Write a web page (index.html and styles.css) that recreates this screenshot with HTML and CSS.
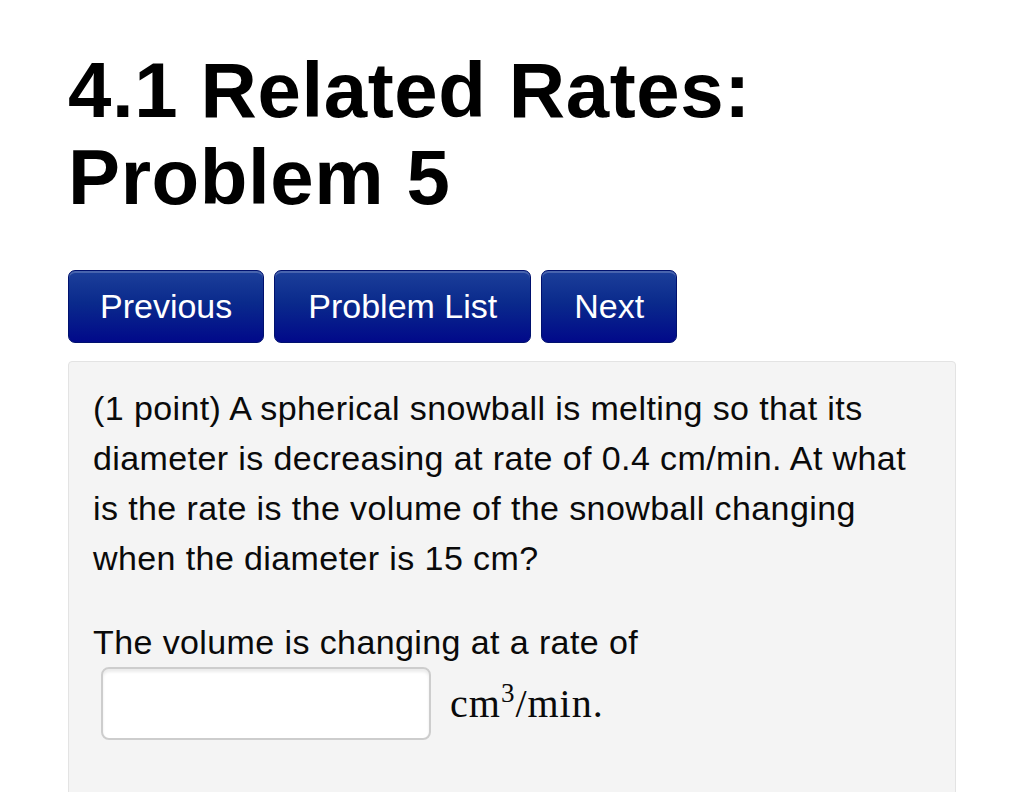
FILE: index.html
```html
<!DOCTYPE html>
<html lang="en">
<head>
<meta charset="utf-8">
<title>4.1 Related Rates: Problem 5</title>
<link rel="stylesheet" href="styles.css">
</head>
<body>
<main class="page">
  <h1 class="title">4.1 Related Rates: Problem 5</h1>
  <nav class="nav">
    <a class="btn" href="#">Previous</a>
    <a class="btn" href="#">Problem List</a>
    <a class="btn" href="#">Next</a>
  </nav>
  <section class="problem">
    <p class="text">(1 point) A spherical snowball is melting so that its diameter is decreasing at rate of 0.4 cm/min. At what is the rate is the volume of the snowball changing when the diameter is 15 cm?</p>
    <p class="text answer-label">The volume is changing at a rate of</p>
    <div class="answer-row">
      <input class="answer" type="text" aria-label="answer">
      <span class="unit">cm<sup>3</sup>/min.</span>
    </div>
  </section>
</main>
</body>
</html>
```
FILE: styles.css
```css
html, body {
  margin: 0;
  padding: 0;
  background: #ffffff;
}
body {
  font-family: "Liberation Sans", Arial, Helvetica, sans-serif;
  color: #000;
}
.page {
  padding: 47px 68px 0 68px;
  width: 888px;
}
.title {
  margin: 0;
  font-size: 78px;
  line-height: 87px;
  font-weight: bold;
  letter-spacing: 0.6px;
  width: 720px;
}
.nav {
  display: flex;
  gap: 10px;
  margin-top: 49px;
}
.btn {
  display: block;
  height: 71px;
  line-height: 71px;
  padding: 0 32px;
  font-size: 34px;
  color: #fff;
  text-decoration: none;
  border: 1px solid #00116e;
  border-radius: 7px;
  background: linear-gradient(#1c3f9a 0%, #0a2a8c 45%, #01098a 100%);
  box-shadow: inset 0 2px 0 rgba(255,255,255,0.2);
}
.btn:first-child {
  padding: 0 31px;
}
.btn:nth-child(2) {
  padding: 0 33px;
}
.problem {
  margin-top: 18px;
  background: #f4f4f4;
  border: 1px solid #e3e3e3;
  border-radius: 4px;
  padding: 21px 24px 60px 24px;
}
.text {
  margin: 0;
  font-size: 34px;
  line-height: 50px;
  letter-spacing: 0.4px;
  color: #0a0a0a;
}
.answer-label {
  margin-top: 34px;
}
.answer-row {
  display: flex;
  align-items: center;
  gap: 19px;
  margin-top: 0;
  padding-left: 8px;
}
.answer {
  box-sizing: border-box;
  width: 330px;
  height: 73px;
  margin: 0;
  border: 2px solid #cdcdcd;
  border-radius: 8px;
  background: #fff;
  box-shadow: inset 0 3px 3px rgba(0,0,0,0.08);
  font-size: 30px;
}
.unit {
  font-family: "Liberation Serif", "Times New Roman", serif;
  font-size: 40px;
  line-height: 44px;
  letter-spacing: 1px;
  color: #0a0a0a;
}
.unit sup {
  font-size: 27px;
  line-height: 0;
  vertical-align: 15px;
}
```
